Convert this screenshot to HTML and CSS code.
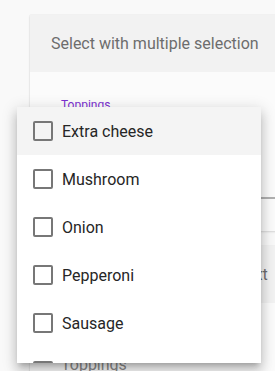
FILE: index.html
```html
<!DOCTYPE html>
<html>
<head>
<meta charset="utf-8">
<link rel="stylesheet" href="styles.css">
</head>
<body>
<div class="page">
  <div class="card">
    <div class="card-header">Select with multiple selection</div>
    <div class="card-body">
      <div class="field">
        <div class="field-label active">Toppings</div>
        <div class="field-value"></div>
        <div class="field-line"></div>
      </div>
    </div>
  </div>
  <div class="card second">
    <div class="card-header">Select with custom trigger text</div>
    <div class="card-body">
      <div class="field">
        <div class="field-row">
          <span class="placeholder">Toppings</span>
          <span class="arrow"></span>
        </div>
      </div>
    </div>
  </div>
</div>
<div class="menu">
  <div class="item hover"><span class="box"></span><span class="txt">Extra cheese</span></div>
  <div class="item"><span class="box"></span><span class="txt">Mushroom</span></div>
  <div class="item"><span class="box"></span><span class="txt">Onion</span></div>
  <div class="item"><span class="box"></span><span class="txt">Pepperoni</span></div>
  <div class="item"><span class="box"></span><span class="txt">Sausage</span></div>
  <div class="item"><span class="box"></span><span class="txt">Tomato</span></div>
</div>
</body>
</html>
```
FILE: styles.css
```css
html, body {
  margin: 0;
  padding: 0;
  background: #f9f9f9;
  font-family: Roboto, "Liberation Sans", sans-serif;
  overflow: hidden;
  height: 371px;
}
.page {
  padding: 15px 0 0 30px;
  width: 320px;
  display: flex;
  flex-direction: column;
  gap: 15px;
}
.card {
  background: #fbfbfb;
  box-shadow: 0 1px 2px rgba(0,0,0,0.12), 0 0 1px rgba(0,0,0,0.15);
}
.card-header {
  background: #f2f2f2;
  height: 57px;
  line-height: 57px;
  padding-left: 21px;
  font-size: 16px;
  color: #6d6d6d;
  white-space: nowrap;
}
.card-body {
  padding: 26px 0 32px 31px;
}
.field-label {
  font-size: 12px;
  line-height: 14px;
  color: #7b2fd0;
}
.field-value {
  height: 85px;
}
.field-line {
  height: 2px;
  background: #b0b0b0;
}
.second .card-body {
  padding-top: 52px;
}
.field-row {
  display: flex;
  align-items: center;
  justify-content: space-between;
  padding-right: 48px;
  font-size: 16px;
  color: #8a8a8a;
}
.arrow {
  width: 0;
  height: 0;
  border-left: 5px solid transparent;
  border-right: 5px solid transparent;
  border-top: 5px solid #777;
}
.menu {
  position: absolute;
  left: 17px;
  top: 107px;
  width: 244px;
  height: 256px;
  overflow: hidden;
  background: #fff;
  box-shadow: 0 5px 5px -3px rgba(0,0,0,0.2), 0 8px 10px 1px rgba(0,0,0,0.14), 0 3px 14px 2px rgba(0,0,0,0.12);
}
.item {
  height: 48px;
  display: flex;
  align-items: center;
  padding-left: 16px;
  gap: 9px;
}
.item.hover {
  background: #f4f4f4;
}
.box {
  width: 16px;
  height: 16px;
  border: 2px solid #777;
  border-radius: 2px;
  flex: none;
}
.txt {
  font-size: 16px;
  color: #262626;
}
```
